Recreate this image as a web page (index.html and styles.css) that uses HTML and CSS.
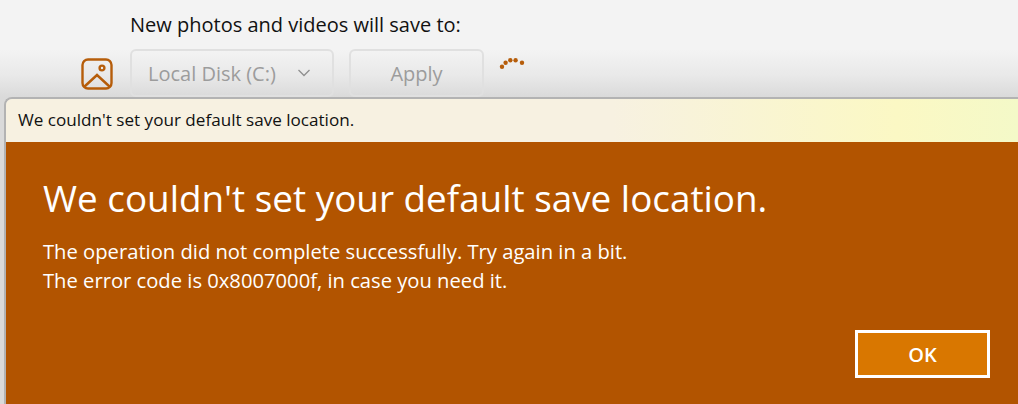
FILE: index.html
```html
<!DOCTYPE html>
<html lang="en">
<head>
<meta charset="utf-8">
<title>Save locations</title>
<link rel="stylesheet" href="styles.css">
</head>
<body>
<section class="settings">
  <p class="label">New photos and videos will save to:</p>
  <div class="row">
    <svg class="pic-icon" width="32" height="32" viewBox="0 0 32 32" fill="none" stroke="#b65d0a" stroke-width="2.4">
      <rect x="1.5" y="1.5" width="29" height="29" rx="5.5"/>
      <circle cx="21" cy="10" r="2.4"/>
      <path d="M3 29 L16 17 L29 29"/>
    </svg>
    <div class="control select"><span>Local Disk (C:)</span>
      <svg class="chev" width="14" height="8" viewBox="0 0 14 8" fill="none" stroke="#8f8f8f" stroke-width="1.3"><path d="M1.5 1 L7 6.5 L12.5 1"/></svg>
    </div>
    <div class="control apply">Apply</div>
    <svg class="spinner" width="28" height="20" viewBox="0 0 28 20" fill="#b65d0a">
      <circle cx="4" cy="15.7" r="2.2"/>
      <circle cx="7.6" cy="11.7" r="2.2"/>
      <circle cx="12.3" cy="9.3" r="2.2"/>
      <circle cx="17.6" cy="9.3" r="2.2"/>
      <circle cx="24" cy="11.7" r="2.2"/>
    </svg>
  </div>
</section>
<section class="dialog">
  <header class="titlebar">We couldn't set your default save location.</header>
  <div class="body">
    <h1>We couldn't set your default save location.</h1>
    <p>The operation did not complete successfully. Try again in a bit.<br>The error code is 0x8007000f, in case you need it.</p>
    <div class="actions"><button class="ok" type="button">OK</button></div>
  </div>
</section>
</body>
</html>
```
FILE: styles.css
```css
* { box-sizing: border-box; }
html, body { margin: 0; height: 100%; }
body {
  width: 1018px;
  height: 404px;
  overflow: hidden;
  display: flex;
  flex-direction: column;
  font-family: "Open Sans", "Noto Sans", sans-serif;
  background: linear-gradient(#f3f3f3 0, #f3f3f3 50px, #e9e9e9 75px, #dadada 97px);
}
.settings {
  height: 97px;
  padding: 12px 0 0 81px;
  flex: none;
}
.label {
  margin: 0 0 0 49px;
  font-size: 20px;
  line-height: 26px;
  color: #111;
}
.row {
  display: flex;
  align-items: flex-start;
  margin-top: 11px;
}
.pic-icon { margin: 9px 17px 0 0; flex: none; }
.control {
  height: 48px;
  border: 2px solid #e0e0e0;
  border-radius: 6px;
  color: #9c9c9c;
  font-size: 20px;
  display: flex;
  align-items: center;
  flex: none;
}
.select { width: 204px; padding-left: 16px; margin-right: 15px; }
.chev { margin-left: 21px; margin-top: 0; }
.apply { width: 135px; justify-content: center; }
.spinner { margin: 2px 0 0 14px; flex: none; }
.dialog {
  flex: 1;
  margin-left: 4px;
  border-top: 2px solid #b3b3b3;
  border-left: 2px solid #b3b3b3;
  border-top-left-radius: 8px;
  overflow: hidden;
  display: flex;
  flex-direction: column;
}
.titlebar {
  height: 43px;
  flex: none;
  padding: 0 0 2px 12px;
  display: flex;
  align-items: center;
  font-size: 17.1px;
  color: #111;
  background: linear-gradient(90deg, #f7f1e1 0, #f7f1e1 60%, #fbf8c4 88%, #f4f9c8 100%);
}
.body {
  flex: 1;
  background: #b25400;
  color: #fff;
  padding: 33px 28px 0 37px;
  display: flex;
  flex-direction: column;
}
h1 {
  margin: 0;
  font-weight: 400;
  font-size: 36.85px;
  line-height: 46px;
}
.body p {
  margin: 16px 0 0;
  font-size: 20.2px;
  line-height: 29px;
}
.actions { display: flex; justify-content: flex-end; margin-top: 35px; }
.ok {
  width: 135px;
  height: 48px;
  border: 3px solid #fff;
  background: #d97700;
  color: #fff;
  font: 600 20px "Open Sans", "Noto Sans", sans-serif;
  padding: 0;
}
```
